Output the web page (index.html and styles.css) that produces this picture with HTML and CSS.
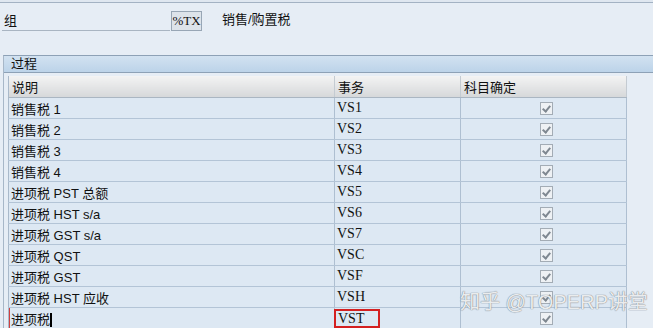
FILE: index.html
```html
<!DOCTYPE html>
<html lang="zh">
<head>
    <meta charset="UTF-8">
    <title>过程</title>
    <link rel="stylesheet" href="styles.css">
</head>
<body>
<div class="topbar"></div>
<div class="field">
    <span class="field-label">组</span>
    <span class="field-input">%TX</span>
    <span class="field-text">销售/购置税</span>
</div>
<div class="group">
    <div class="group-title">过程</div>
    <div class="group-body">
        <table class="grid">
            <colgroup><col class="c1"><col class="c2"><col class="c3"></colgroup>
            <thead>
                <tr><th>说明</th><th>事务</th><th>科目确定</th></tr>
            </thead>
            <tbody>
                <tr><td>销售税 1</td><td class="code">VS1</td><td class="chk"><span class="box"></span></td></tr>
                <tr><td>销售税 2</td><td class="code">VS2</td><td class="chk"><span class="box"></span></td></tr>
                <tr><td>销售税 3</td><td class="code">VS3</td><td class="chk"><span class="box"></span></td></tr>
                <tr><td>销售税 4</td><td class="code">VS4</td><td class="chk"><span class="box"></span></td></tr>
                <tr><td>进项税 PST 总额</td><td class="code">VS5</td><td class="chk"><span class="box"></span></td></tr>
                <tr><td>进项税 HST s/a</td><td class="code">VS6</td><td class="chk"><span class="box"></span></td></tr>
                <tr><td>进项税 GST s/a</td><td class="code">VS7</td><td class="chk"><span class="box"></span></td></tr>
                <tr><td>进项税 QST</td><td class="code">VSC</td><td class="chk"><span class="box"></span></td></tr>
                <tr><td>进项税 GST</td><td class="code">VSF</td><td class="chk"><span class="box"></span></td></tr>
                <tr><td>进项税 HST 应收</td><td class="code">VSH</td><td class="chk"><span class="box"></span></td></tr>
                <tr class="edit"><td>进项税<span class="caret"></span></td><td class="code"><span class="mark">VST</span></td><td class="chk"><span class="box"></span></td></tr>
            </tbody>
        </table>
    </div>
</div>
<div class="watermark">知乎 @TOPERP讲堂</div>
</body>
</html>
```

FILE: styles.css
```css
body{
    margin:0;
    background:#e6edf5;
    font-family:"Liberation Sans","Noto Sans CJK SC",sans-serif;
    font-size:13px;
    color:#111;
    overflow:hidden;
    height:328px;
    position:relative;
}
.topbar{
    height:2px;
    border-bottom:1px solid #a3b2c3;
    background:#dfe7f0;
}
.field{
    display:flex;
    align-items:flex-end;
    margin-top:8px;
    height:20px;
}
.field-label{
    width:166px;
    margin-left:2px;
    padding-left:2px;
    border-bottom:1px solid #a9b5c2;
    line-height:18px;
}
.field-input{
    width:29px;
    height:18px;
    margin-left:1px;
    border:1px solid #98a6b5;
    background:#dde3ea;
    font-family:"Liberation Serif",serif;
    font-size:13px;
    line-height:18px;
    text-align:center;
}
.field-text{
    margin-left:20px;
    line-height:18px;
    padding-bottom:2px;
}
.group{
    margin-top:24px;
    margin-left:3px;
    border-top:1px solid #8da1b6;
    border-left:1px solid #a7b7c8;
    height:272px;
    overflow:hidden;
}
.group-title{
    height:16px;
    line-height:16px;
    padding-left:7px;
    background:linear-gradient(#d2e2f1,#bcd3e9);
    border-bottom:1px solid #8da1b6;
}
.group-body{
    padding:3px 0 0 4px;
}
.grid{
    border-collapse:collapse;
    table-layout:fixed;
    width:618px;
    border-left:1px solid #a9b9ca;
}
.c1{width:326px;}
.c2{width:126px;}
.c3{width:166px;}
.grid th{
    height:21px;
    text-align:left;
    font-weight:normal;
    padding:0 0 0 3px;
    background:linear-gradient(#f3f3f3,#d6d8da);
    border-bottom:1px solid #aab6c2;
    border-right:1px solid #c4cbd2;
}
.grid td{
    height:20px;
    padding:0 0 0 2px;
    background:#dde8f3;
    border-bottom:1px solid #b3c4d6;
    border-right:1px solid #aebfd1;
    white-space:nowrap;
}
.grid td.code{
    font-family:"Liberation Serif",serif;
    font-size:14px;
    padding-left:2px;
}
.grid td.chk{
    text-align:center;
    padding:0;
}
.box{
    display:inline-block;
    width:11px;
    height:11px;
    border:1px solid #a3acb5;
    background:#eef1f4;
    vertical-align:middle;
    position:relative;
    top:-1px;
    left:3px;
}
.box::after{
    content:"";
    position:absolute;
    left:3px;
    top:1px;
    width:3px;
    height:6px;
    border-right:2px solid #7f8891;
    border-bottom:2px solid #7f8891;
    transform:rotate(40deg);
}
.caret{
    display:inline-block;
    width:2px;
    height:14px;
    background:#000;
    vertical-align:middle;
}
.edit td:first-child{
    box-shadow:inset 2px 0 0 -1px #d04040;
}
.mark{
    display:inline-block;
    margin-left:-3px;
    padding:0 14px 0 2px;
    border:2px solid #d42020;
    line-height:15px;
}
.watermark{
    position:absolute;
    left:460px;
    top:286px;
    font-size:20px;
    color:rgba(255,255,255,0.85);
    text-shadow:0 0 1px #7d8790,0 0 1px #7d8790;
    white-space:nowrap;
}
```
